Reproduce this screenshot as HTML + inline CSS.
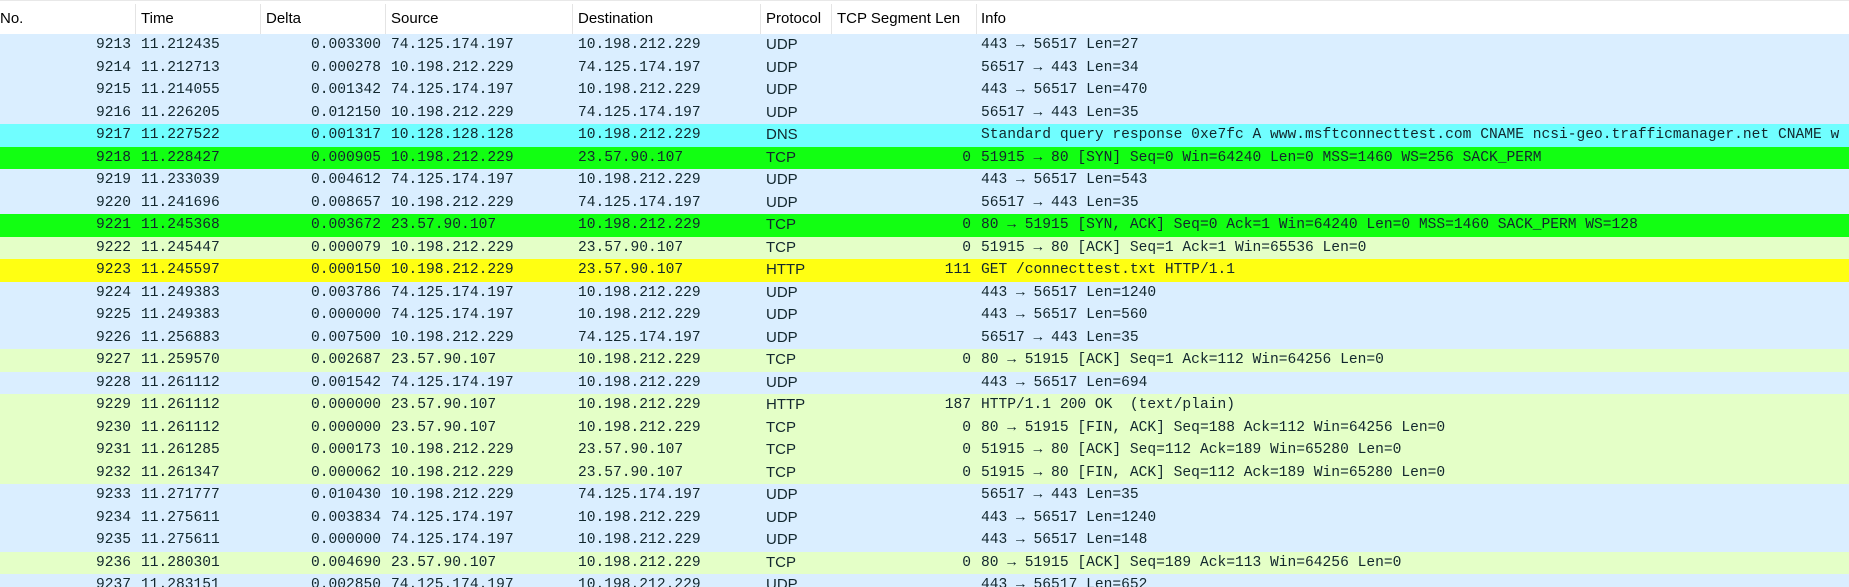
<!DOCTYPE html>
<html><head><meta charset="utf-8"><style>
*{margin:0;padding:0;box-sizing:border-box}
html,body{width:1849px;height:587px;overflow:hidden}
body{background:#fff;position:relative;font-family:"Liberation Mono",monospace;font-size:14.6px;color:#12272e}
.hdr{position:absolute;left:0;top:0;width:1849px;height:34px;border-top:1px solid #e8e8e8;background:#fff;font-family:"Liberation Sans",sans-serif;font-size:15px;color:#000}
.hdr span{position:absolute;top:9px}
.hdr i{position:absolute;top:3px;width:1px;height:31px;background:#e4e4e4}
.row{position:absolute;left:0;width:100%;height:22.5px;white-space:pre;overflow:hidden}
.row span{position:absolute;top:3px;line-height:16px}
.n{right:1718px}.t{left:141px}.d{right:1468px}.s{left:391px}.ds{left:578px}.p{left:766px;font-family:"Liberation Sans",sans-serif;font-size:15px}.l{right:878px}.i{left:981px}
.b{background:#daeeff}.g{background:#e4ffc7}.c{background:#70feff}.G{background:#12ff12}.y{background:#ffff12}
</style></head><body>
<div class="hdr">
<span style="left:0">No.</span><i style="left:135px"></i>
<span style="left:141px">Time</span><i style="left:260px"></i>
<span style="left:266px">Delta</span><i style="left:385px"></i>
<span style="left:391px">Source</span><i style="left:572px"></i>
<span style="left:578px">Destination</span><i style="left:760px"></i>
<span style="left:766px">Protocol</span><i style="left:831px"></i>
<span style="left:837px">TCP Segment Len</span><i style="left:976px"></i>
<span style="left:981px">Info</span>
</div>
<div class="row b" style="top:34px"><span class="n">9213</span><span class="t">11.212435</span><span class="d">0.003300</span><span class="s">74.125.174.197</span><span class="ds">10.198.212.229</span><span class="p">UDP</span><span class="i">443 → 56517 Len=27</span></div>
<div class="row b" style="top:56.5px"><span class="n">9214</span><span class="t">11.212713</span><span class="d">0.000278</span><span class="s">10.198.212.229</span><span class="ds">74.125.174.197</span><span class="p">UDP</span><span class="i">56517 → 443 Len=34</span></div>
<div class="row b" style="top:79px"><span class="n">9215</span><span class="t">11.214055</span><span class="d">0.001342</span><span class="s">74.125.174.197</span><span class="ds">10.198.212.229</span><span class="p">UDP</span><span class="i">443 → 56517 Len=470</span></div>
<div class="row b" style="top:101.5px"><span class="n">9216</span><span class="t">11.226205</span><span class="d">0.012150</span><span class="s">10.198.212.229</span><span class="ds">74.125.174.197</span><span class="p">UDP</span><span class="i">56517 → 443 Len=35</span></div>
<div class="row c" style="top:124px"><span class="n">9217</span><span class="t">11.227522</span><span class="d">0.001317</span><span class="s">10.128.128.128</span><span class="ds">10.198.212.229</span><span class="p">DNS</span><span class="i">Standard query response 0xe7fc A www.msftconnecttest.com CNAME ncsi-geo.trafficmanager.net CNAME w</span></div>
<div class="row G" style="top:146.5px"><span class="n">9218</span><span class="t">11.228427</span><span class="d">0.000905</span><span class="s">10.198.212.229</span><span class="ds">23.57.90.107</span><span class="p">TCP</span><span class="l">0</span><span class="i">51915 → 80 [SYN] Seq=0 Win=64240 Len=0 MSS=1460 WS=256 SACK_PERM</span></div>
<div class="row b" style="top:169px"><span class="n">9219</span><span class="t">11.233039</span><span class="d">0.004612</span><span class="s">74.125.174.197</span><span class="ds">10.198.212.229</span><span class="p">UDP</span><span class="i">443 → 56517 Len=543</span></div>
<div class="row b" style="top:191.5px"><span class="n">9220</span><span class="t">11.241696</span><span class="d">0.008657</span><span class="s">10.198.212.229</span><span class="ds">74.125.174.197</span><span class="p">UDP</span><span class="i">56517 → 443 Len=35</span></div>
<div class="row G" style="top:214px"><span class="n">9221</span><span class="t">11.245368</span><span class="d">0.003672</span><span class="s">23.57.90.107</span><span class="ds">10.198.212.229</span><span class="p">TCP</span><span class="l">0</span><span class="i">80 → 51915 [SYN, ACK] Seq=0 Ack=1 Win=64240 Len=0 MSS=1460 SACK_PERM WS=128</span></div>
<div class="row g" style="top:236.5px"><span class="n">9222</span><span class="t">11.245447</span><span class="d">0.000079</span><span class="s">10.198.212.229</span><span class="ds">23.57.90.107</span><span class="p">TCP</span><span class="l">0</span><span class="i">51915 → 80 [ACK] Seq=1 Ack=1 Win=65536 Len=0</span></div>
<div class="row y" style="top:259px"><span class="n">9223</span><span class="t">11.245597</span><span class="d">0.000150</span><span class="s">10.198.212.229</span><span class="ds">23.57.90.107</span><span class="p">HTTP</span><span class="l">111</span><span class="i">GET /connecttest.txt HTTP/1.1</span></div>
<div class="row b" style="top:281.5px"><span class="n">9224</span><span class="t">11.249383</span><span class="d">0.003786</span><span class="s">74.125.174.197</span><span class="ds">10.198.212.229</span><span class="p">UDP</span><span class="i">443 → 56517 Len=1240</span></div>
<div class="row b" style="top:304px"><span class="n">9225</span><span class="t">11.249383</span><span class="d">0.000000</span><span class="s">74.125.174.197</span><span class="ds">10.198.212.229</span><span class="p">UDP</span><span class="i">443 → 56517 Len=560</span></div>
<div class="row b" style="top:326.5px"><span class="n">9226</span><span class="t">11.256883</span><span class="d">0.007500</span><span class="s">10.198.212.229</span><span class="ds">74.125.174.197</span><span class="p">UDP</span><span class="i">56517 → 443 Len=35</span></div>
<div class="row g" style="top:349px"><span class="n">9227</span><span class="t">11.259570</span><span class="d">0.002687</span><span class="s">23.57.90.107</span><span class="ds">10.198.212.229</span><span class="p">TCP</span><span class="l">0</span><span class="i">80 → 51915 [ACK] Seq=1 Ack=112 Win=64256 Len=0</span></div>
<div class="row b" style="top:371.5px"><span class="n">9228</span><span class="t">11.261112</span><span class="d">0.001542</span><span class="s">74.125.174.197</span><span class="ds">10.198.212.229</span><span class="p">UDP</span><span class="i">443 → 56517 Len=694</span></div>
<div class="row g" style="top:394px"><span class="n">9229</span><span class="t">11.261112</span><span class="d">0.000000</span><span class="s">23.57.90.107</span><span class="ds">10.198.212.229</span><span class="p">HTTP</span><span class="l">187</span><span class="i">HTTP/1.1 200 OK  (text/plain)</span></div>
<div class="row g" style="top:416.5px"><span class="n">9230</span><span class="t">11.261112</span><span class="d">0.000000</span><span class="s">23.57.90.107</span><span class="ds">10.198.212.229</span><span class="p">TCP</span><span class="l">0</span><span class="i">80 → 51915 [FIN, ACK] Seq=188 Ack=112 Win=64256 Len=0</span></div>
<div class="row g" style="top:439px"><span class="n">9231</span><span class="t">11.261285</span><span class="d">0.000173</span><span class="s">10.198.212.229</span><span class="ds">23.57.90.107</span><span class="p">TCP</span><span class="l">0</span><span class="i">51915 → 80 [ACK] Seq=112 Ack=189 Win=65280 Len=0</span></div>
<div class="row g" style="top:461.5px"><span class="n">9232</span><span class="t">11.261347</span><span class="d">0.000062</span><span class="s">10.198.212.229</span><span class="ds">23.57.90.107</span><span class="p">TCP</span><span class="l">0</span><span class="i">51915 → 80 [FIN, ACK] Seq=112 Ack=189 Win=65280 Len=0</span></div>
<div class="row b" style="top:484px"><span class="n">9233</span><span class="t">11.271777</span><span class="d">0.010430</span><span class="s">10.198.212.229</span><span class="ds">74.125.174.197</span><span class="p">UDP</span><span class="i">56517 → 443 Len=35</span></div>
<div class="row b" style="top:506.5px"><span class="n">9234</span><span class="t">11.275611</span><span class="d">0.003834</span><span class="s">74.125.174.197</span><span class="ds">10.198.212.229</span><span class="p">UDP</span><span class="i">443 → 56517 Len=1240</span></div>
<div class="row b" style="top:529px"><span class="n">9235</span><span class="t">11.275611</span><span class="d">0.000000</span><span class="s">74.125.174.197</span><span class="ds">10.198.212.229</span><span class="p">UDP</span><span class="i">443 → 56517 Len=148</span></div>
<div class="row g" style="top:551.5px"><span class="n">9236</span><span class="t">11.280301</span><span class="d">0.004690</span><span class="s">23.57.90.107</span><span class="ds">10.198.212.229</span><span class="p">TCP</span><span class="l">0</span><span class="i">80 → 51915 [ACK] Seq=189 Ack=113 Win=64256 Len=0</span></div>
<div class="row b" style="top:574px"><span class="n">9237</span><span class="t">11.283151</span><span class="d">0.002850</span><span class="s">74.125.174.197</span><span class="ds">10.198.212.229</span><span class="p">UDP</span><span class="i">443 → 56517 Len=652</span></div>
</body></html>
